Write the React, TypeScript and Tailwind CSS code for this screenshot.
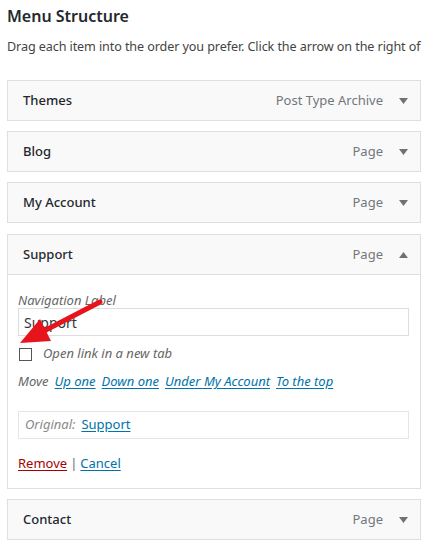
import React from 'react';

type MenuItem = {
  title: string;
  type: string;
};

const collapsed: MenuItem[] = [
  { title: 'Themes', type: 'Post Type Archive' },
  { title: 'Blog', type: 'Page' },
  { title: 'My Account', type: 'Page' },
];

const Caret: React.FC<{ up?: boolean }> = ({ up }) => (
  <svg width="9" height="6" viewBox="0 0 9 6" className="shrink-0">
    <polygon points={up ? '0,6 9,6 4.5,0' : '0,0 9,0 4.5,6'} fill="#6d7277" />
  </svg>
);

const ItemHandle: React.FC<{ item: MenuItem; open?: boolean; className?: string }> = ({
  item,
  open,
  className = '',
}) => (
  <div
    className={`h-[41px] flex items-center pl-[15px] pr-[12px] bg-[#f9f9f9] border border-[#dfdfdf] ${className}`}
  >
    <span className="flex-1 text-[13px] font-medium text-[#23282d]">{item.title}</span>
    <span className="text-[13px] text-[#72777c] mr-[16px]">{item.type}</span>
    <Caret up={open} />
  </div>
);

const linkCls = 'text-[#0073aa] underline underline-offset-2';

export default function App() {
  return (
    <div
      className="relative w-[432px] h-[550px] overflow-hidden bg-white px-[7px]"
      style={{ fontFamily: '"Noto Sans", "Open Sans", sans-serif' }}
    >
      <h3 className="pt-[6px] text-[16px] leading-[20px] font-semibold text-[#23282d]">
        Menu Structure
      </h3>
      <p className="mt-[11px] mb-[23px] text-[12.6px] tracking-[-0.1px] leading-[20px] text-[#444] whitespace-nowrap">
        Drag each item into the order you prefer. Click the arrow on the right of
      </p>

      <div className="w-[414px]">
        {collapsed.map((item, i) => (
          <ItemHandle key={item.title} item={item} className={i === 2 ? 'mb-[11px]' : 'mb-[10px]'} />
        ))}

        {/* expanded item */}
        <ItemHandle item={{ title: 'Support', type: 'Page' }} open />
        <div className="mb-[10px] border border-t-0 border-[#dfdfdf] bg-white pl-[10px] pr-[11px] pt-[17px] pb-[14px] text-[13px]">
          <label className="block leading-[16px] italic text-[#666]">Navigation Label</label>
          <input
            readOnly
            value="Support"
            className="block w-full h-[28px] border border-[#ddd] px-[5px] text-[14px] text-[#32373c] outline-none"
          />
          <label className="mt-[8px] h-[20px] flex items-center italic text-[#666]">
            <span className="w-[13px] h-[13px] ml-[1px] mr-[11px] border border-[#555] bg-white" />
            Open link in a new tab
          </label>
          <div className="mt-[8px] h-[20px] flex items-center gap-[6px] italic text-[#666]">
            <span>Move</span>
            <a className={linkCls}>Up one</a>
            <a className={linkCls}>Down one</a>
            <a className={linkCls}>Under My Account</a>
            <a className={linkCls}>To the top</a>
          </div>
          <div className="mt-[19px] h-[28px] flex items-center gap-[6px] border border-[#e5e5e5] px-[6px]">
            <span className="italic text-[#888]">Original:</span>
            <a className={linkCls}>Support</a>
          </div>
          <div className="mt-[15px] h-[20px] flex items-center gap-[3px] text-[#666]">
            <a className="text-[#a00] underline underline-offset-2">Remove</a>
            <span>|</span>
            <a className={linkCls}>Cancel</a>
          </div>
        </div>

        <ItemHandle item={{ title: 'Contact', type: 'Page' }} />
      </div>

      {/* red callout arrow */}
      <svg className="absolute left-0 top-0 pointer-events-none" width="432" height="550">
        <line x1="100" y1="302" x2="44" y2="331" stroke="#e8141b" strokeWidth="5" strokeLinecap="round" />
        <polygon points="20,343 51,341 40,319" fill="#e8141b" />
      </svg>
    </div>
  );
}
